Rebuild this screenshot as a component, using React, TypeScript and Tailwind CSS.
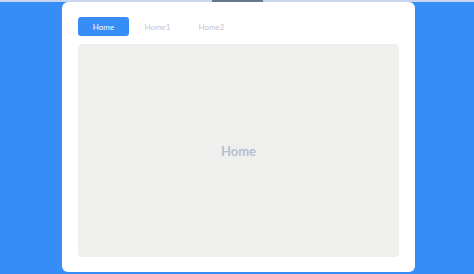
import React, { useState } from "react";

const tabs = ["Home", "Home1", "Home2"];

export default function App() {
  const [active, setActive] = useState(0);

  return (
    <div
      className="w-[474px] h-[274px] bg-[#368df5] flex flex-col overflow-hidden"
      style={{ fontFamily: "Lato, 'Open Sans', sans-serif" }}
    >
      <div className="h-[2px] bg-[#c9d5ec] flex justify-center">
        <div className="w-[51px] h-full bg-[#66788f]" />
      </div>
      <div className="flex-1 flex pl-[62px] pb-[2px]">
        <div className="w-[353px] bg-white rounded-[6px] px-4 pt-[15px] pb-[15px] flex flex-col">
          <div className="flex items-center gap-[3px]">
            {tabs.map((t, i) => (
              <button
                key={t}
                onClick={() => setActive(i)}
                className={
                  i === active
                    ? "w-[51px] h-[19px] rounded-[3px] bg-[#368df5] text-white text-[8px]"
                    : "w-[51px] h-[19px] text-[#c3c6cc] text-[8px]"
                }
              >
                {t}
              </button>
            ))}
          </div>
          <div className="mt-[8px] flex-1 bg-[#eff0ee] rounded-[4px] flex items-center justify-center pt-[2px]">
            <span className="text-[13px] font-bold text-[#b6bed0]">{tabs[active]}</span>
          </div>
        </div>
      </div>
    </div>
  );
}
